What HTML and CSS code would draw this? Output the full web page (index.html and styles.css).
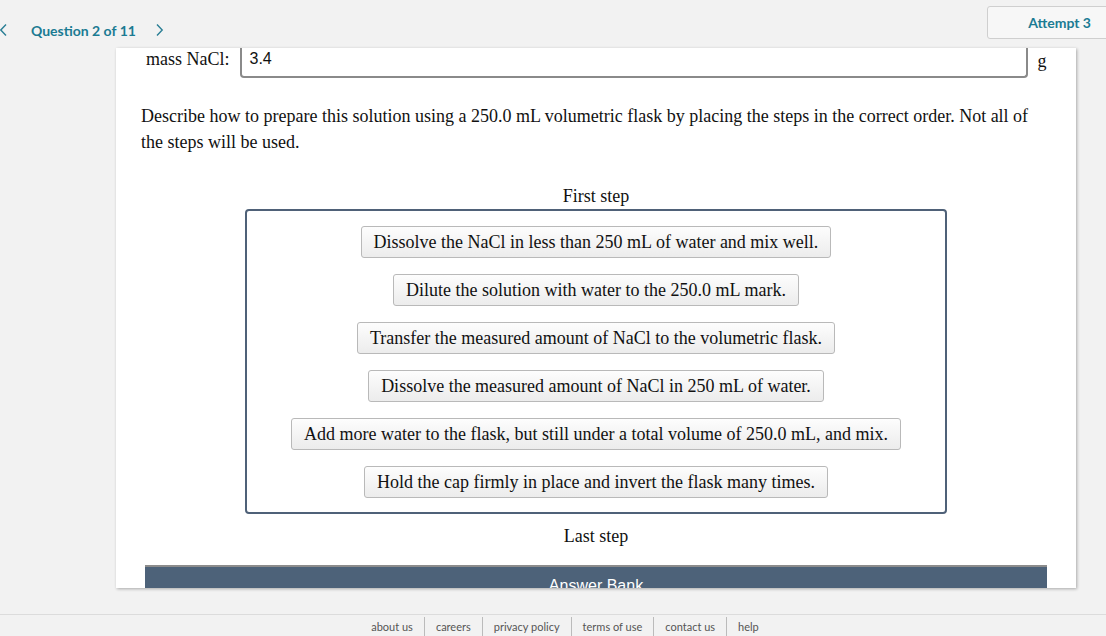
FILE: index.html
```html
<!DOCTYPE html>
<html lang="en">
<head>
  <meta charset="UTF-8" />
  <title>Question 2 of 11</title>
  <link rel="stylesheet" href="styles.css">
</head>
<body>
  <div class="topbar">
    <div class="qnav">
      <svg class="chev" width="10" height="14" viewBox="0 0 10 14"><path d="M7 1.5 L1.8 7 L7 12.5" fill="none" stroke="#2b7f95" stroke-width="1.4"/></svg>
      <span class="qtitle">Question 2 of 11</span>
      <svg class="chev next" width="10" height="14" viewBox="0 0 10 14"><path d="M2 1.5 L7.2 7 L2 12.5" fill="none" stroke="#2b7f95" stroke-width="1.4"/></svg>
    </div>
    <div class="attempt">Attempt 3</div>
  </div>

  <div class="card">
    <div class="mass-row">
      <span class="mass-label">mass NaCl:</span>
      <div class="mass-input">3.4</div>
      <span class="unit">g</span>
    </div>

    <p class="question">Describe how to prepare this solution using a 250.0 mL volumetric flask by placing the steps in the correct order. Not all of the steps will be used.</p>

    <div class="step-label">First step</div>
    <div class="steps">
      <button class="step">Dissolve the NaCl in less than 250 mL of water and mix well.</button>
      <button class="step">Dilute the solution with water to the 250.0 mL mark.</button>
      <button class="step">Transfer the measured amount of NaCl to the volumetric flask.</button>
      <button class="step">Dissolve the measured amount of NaCl in 250 mL of water.</button>
      <button class="step">Add more water to the flask, but still under a total volume of 250.0 mL, and mix.</button>
      <button class="step">Hold the cap firmly in place and invert the flask many times.</button>
    </div>
    <div class="step-label last">Last step</div>

    <div class="bank">Answer Bank</div>
  </div>

  <div class="footer">
    <a href="#">about us</a>
    <a href="#">careers</a>
    <a href="#">privacy policy</a>
    <a href="#">terms of use</a>
    <a href="#">contact us</a>
    <a href="#">help</a>
  </div>
</body>
</html>
```

FILE: styles.css
```css
* {
  box-sizing: border-box;
}

html, body {
  margin: 0;
  padding: 0;
  overflow: hidden;
}

body {
  background: #f2f2f2;
  width: 1106px;
  height: 636px;
  font-family: "Liberation Serif", serif;
  color: #111;
}

.topbar {
  height: 48px;
  display: flex;
  justify-content: space-between;
  align-items: flex-start;
}

.qnav {
  display: flex;
  align-items: center;
  height: 24px;
  margin-top: 18px;
}

.chev {
  display: block;
  margin-left: -1px;
}

.chev.next {
  margin-left: 19px;
}

.qtitle {
  font-family: "Lato", sans-serif;
  font-weight: 700;
  font-size: 14px;
  color: #1b7b93;
  margin-left: 22px;
}

.attempt {
  margin-top: 6px;
  margin-right: -8px;
  width: 127px;
  height: 33px;
  background: #f7f7f7;
  border: 1px solid #cfcfcf;
  border-radius: 3px;
  font-family: "Lato", sans-serif;
  font-weight: 700;
  font-size: 14px;
  color: #1b7b93;
  padding: 7px 22px 0 0;
  text-align: right;
}

.card {
  margin-left: 116px;
  width: 960px;
  height: 540px;
  background: #fff;
  box-shadow: 1px 1px 3px rgba(0, 0, 0, 0.3);
  overflow: hidden;
  padding: 0 29px;
}

.mass-row {
  display: flex;
  height: 30px;
  font-size: 18px;
  line-height: 22px;
}

.mass-label {
  margin: 0 0 0 1px;
}

.mass-input {
  margin-left: 10px;
  width: 788px;
  height: 30px;
  border: 2px solid #8a8a8a;
  border-top: none;
  border-radius: 0 0 4px 4px;
  font-family: "Liberation Sans", sans-serif;
  font-size: 16px;
  padding: 0 8px;
  line-height: 22px;
}

.unit {
  margin: 2px 0 0 10px;
}

.question {
  margin: 25px 0 0 -4px;
  font-size: 18px;
  line-height: 26px;
}

.step-label {
  text-align: center;
  font-size: 18px;
  line-height: 20px;
  margin-top: 31px;
}

.step-label.last {
  margin-top: 12px;
}

.steps {
  margin: 3px auto 0;
  width: 702px;
  border: 2px solid #4f6178;
  border-radius: 4px;
  padding: 7px 0 6px;
  display: flex;
  flex-direction: column;
  align-items: center;
}

.step {
  margin: 8px 0;
  height: 32px;
  padding: 0 12px;
  font-family: "Liberation Serif", serif;
  font-size: 18px;
  color: #111;
  background: linear-gradient(#fdfdfd, #ececec);
  border: 1px solid #b9b9b9;
  border-radius: 3px;
}

.bank {
  margin-top: 19px;
  height: 40px;
  background: #4d6279;
  border-top: 2px solid #8c8c8c;
  color: #fff;
  font-family: "Liberation Sans", sans-serif;
  font-size: 16px;
  text-align: center;
  padding-top: 10px;
}

.footer {
  margin-top: 26px;
  border-top: 1px solid #dcdcdc;
  display: flex;
  justify-content: center;
  padding: 2px 0 0 24px;
}

.footer a {
  font-family: "Lato", sans-serif;
  font-size: 11px;
  color: #555;
  text-decoration: none;
  padding: 3px 11px 6px;
  border-left: 1px solid #bbb;
}

.footer a:first-child {
  border-left: none;
}
```
